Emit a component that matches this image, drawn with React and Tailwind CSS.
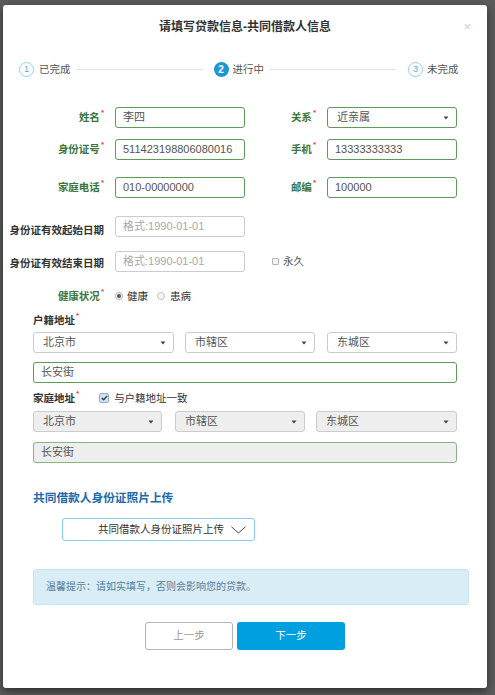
import React from "react";

const Req = () => (
  <span className="text-[#e8473b] text-[8px] align-top relative -top-[3px] ml-[1px]">*</span>
);

const Arrow = () => (
  <svg width="6" height="4" viewBox="0 0 6 4" className="shrink-0">
    <path d="M0.5 0.5 L5.5 0.5 L3 3.5 Z" fill="#444" />
  </svg>
);

const Select = ({ value, w, disabled }) => (
  <div
    className={`${w} h-[21px] rounded-[3px] border flex items-center justify-between pl-[9px] pr-[7px] text-[11px] text-[#555] ${
      disabled ? "bg-[#eeeeee] border-[#cccccc]" : "bg-white border-[#cccccc]"
    }`}
  >
    <span>{value}</span>
    <Arrow />
  </div>
);

const GreenSelect = ({ value }) => (
  <div className="w-[130px] h-[21px] rounded-[3px] border border-[#5f9a5c] bg-white flex items-center justify-between pl-[9px] pr-[7px] text-[11px] text-[#555]">
    <span>{value}</span>
    <Arrow />
  </div>
);

const Input = ({ value, placeholder, w = "w-[130px]", green = true, disabled }) => (
  <div
    className={`${w} h-[21px] rounded-[3px] border flex items-center pl-[7px] text-[11px] ${
      green ? (disabled ? "border-[#86b583]" : "border-[#5f9a5c]") : "border-[#cccccc]"
    } ${disabled ? "bg-[#eeeeee]" : "bg-white"} ${value ? "text-[#555]" : "text-[#a8a8a8]"}`}
  >
    {value || placeholder}
  </div>
);

const Label = ({ children, req, w = "w-[101px]", dark, extra = "" }) => (
  <div
    className={`${w} shrink-0 text-right text-[10.5px] font-bold leading-none whitespace-nowrap ${
      dark ? "text-[#333]" : "text-[#3c763d]"
    } ${extra}`}
  >
    {children}
    {req && <Req />}
  </div>
);

const StepCircle = ({ n, active }) =>
  active ? (
    <div className="shrink-0 w-[15px] h-[15px] rounded-full bg-[#1c97d4] text-white text-[10px] font-bold flex items-center justify-center leading-none">
      {n}
    </div>
  ) : (
    <div className="shrink-0 w-[15px] h-[15px] rounded-full border border-[#8fd3f0] text-[#55afe0] text-[9px] flex items-center justify-center leading-none">
      {n}
    </div>
  );

export default function App() {
  return (
    <div className="w-[495px] h-[695px] bg-[#5b5b5b] pt-[5px] pl-[3px] overflow-hidden font-['Liberation_Sans','Noto_Sans_CJK_SC',sans-serif]">
      <div className="w-[484px] h-[683px] bg-white rounded-[3px] shadow-[0_3px_9px_rgba(0,0,0,0.5)] flex flex-col">
        {/* header */}
        <div className="relative h-[44px] flex items-center justify-center shrink-0">
          <h1 className="text-[12px] font-bold text-[#333] leading-none">请填写贷款信息-共同借款人信息</h1>
          <span className="absolute right-[16px] top-[15px] text-[#cfcfcf] text-[13px] leading-none">×</span>
        </div>

        {/* steps */}
        <div className="mt-[13px] ml-[16px] w-[438px] h-[15px] flex items-center shrink-0">
          <StepCircle n="1" />
          <span className="shrink-0 whitespace-nowrap ml-[5px] text-[10.5px] text-[#555] leading-none">已完成</span>
          <div className="shrink-0 ml-[6px] mr-[11px] w-[126px] h-px bg-[#e3e3e3]" />
          <StepCircle n="2" active />
          <span className="shrink-0 whitespace-nowrap ml-[4px] text-[10.5px] text-[#555] leading-none">进行中</span>
          <div className="shrink-0 ml-[6px] mr-[12px] w-[126px] h-px bg-[#e3e3e3]" />
          <StepCircle n="3" />
          <span className="shrink-0 whitespace-nowrap ml-[4px] text-[10.5px] text-[#555] leading-none">未完成</span>
        </div>

        {/* row 1 */}
        <div className="mt-[30px] h-[21px] flex items-center shrink-0">
          <Label req>姓名</Label>
          <div className="ml-[11px]"><Input value="李四" /></div>
          <Label req w="w-[71px]">关系</Label>
          <div className="ml-[11px]"><GreenSelect value="近亲属" /></div>
        </div>

        {/* row 2 */}
        <div className="mt-[11px] h-[21px] flex items-center shrink-0">
          <Label req>身份证号</Label>
          <div className="ml-[11px]"><Input value="511423198806080016" /></div>
          <Label req w="w-[71px]">手机</Label>
          <div className="ml-[11px]"><Input value="13333333333" /></div>
        </div>

        {/* row 3 */}
        <div className="mt-[17px] h-[21px] flex items-center shrink-0">
          <Label req>家庭电话</Label>
          <div className="ml-[11px]"><Input value="010-00000000" /></div>
          <Label req w="w-[71px]">邮编</Label>
          <div className="ml-[11px]"><Input value="100000" /></div>
        </div>

        {/* row 4 */}
        <div className="mt-[18px] h-[21px] flex items-center shrink-0">
          <Label dark extra="mt-[7px]">身份证有效起始日期</Label>
          <div className="ml-[11px]"><Input placeholder="格式:1990-01-01" green={false} /></div>
        </div>

        {/* row 5 */}
        <div className="mt-[14px] h-[21px] flex items-center shrink-0">
          <Label dark extra="mt-[4px]">身份证有效结束日期</Label>
          <div className="ml-[11px]"><Input placeholder="格式:1990-01-01" green={false} /></div>
          <div className="ml-[27px] w-[7px] h-[7px] border border-[#b5b5b5] rounded-[1px] bg-[#f4f4f4]" />
          <span className="ml-[4px] text-[10.5px] text-[#555] leading-none">永久</span>
        </div>

        {/* row 6 health */}
        <div className="mt-[14px] h-[20px] flex items-center shrink-0">
          <Label req>健康状况</Label>
          <div className="ml-[11px] w-[8px] h-[8px] rounded-full border border-[#b5b5b5] bg-[#f4f4f4] flex items-center justify-center">
            <div className="w-[4px] h-[4px] rounded-full bg-[#555]" />
          </div>
          <span className="ml-[4px] text-[10.5px] text-[#333] leading-none">健康</span>
          <div className="ml-[9px] w-[8px] h-[8px] rounded-full border border-[#c5c5c5] bg-[#f4f4f4]" />
          <span className="ml-[5px] text-[10.5px] text-[#333] leading-none">患病</span>
        </div>

        {/* 户籍地址 */}
        <div className="mt-[6px] h-[16px] flex items-center pl-[30px] shrink-0">
          <span className="text-[10.5px] font-bold text-[#333] leading-none">
            户籍地址<Req />
          </span>
        </div>
        <div className="mt-[4px] ml-[30px] flex shrink-0">
          <Select value="北京市" w="w-[141px]" />
          <div className="ml-[11px]"><Select value="市辖区" w="w-[130px]" /></div>
          <div className="ml-[12px]"><Select value="东城区" w="w-[130px]" /></div>
        </div>
        <div className="mt-[9px] ml-[30px] shrink-0">
          <Input value="长安街" w="w-[424px]" />
        </div>

        {/* 家庭地址 */}
        <div className="mt-[7px] h-[16px] flex items-center pl-[30px] shrink-0">
          <span className="text-[10.5px] font-bold text-[#333] leading-none">
            家庭地址<Req />
          </span>
          <div className="ml-[20px] w-[10px] h-[10px] rounded-[2px] border border-[#8eaed0] bg-[#cfe2f6] flex items-center justify-center">
            <svg width="7" height="6" viewBox="0 0 7 6">
              <path d="M0.8 3 L2.7 4.8 L6.2 0.9" stroke="#333" strokeWidth="1.3" fill="none" />
            </svg>
          </div>
          <span className="ml-[5px] text-[10.5px] text-[#333] leading-none">与户籍地址一致</span>
        </div>
        <div className="mt-[5px] ml-[30px] flex shrink-0">
          <Select value="北京市" w="w-[129px]" disabled />
          <div className="ml-[13px]"><Select value="市辖区" w="w-[130px]" disabled /></div>
          <div className="ml-[11px]"><Select value="东城区" w="w-[141px]" disabled /></div>
        </div>
        <div className="mt-[10px] ml-[30px] shrink-0">
          <Input value="长安街" w="w-[424px]" disabled />
        </div>

        {/* upload section */}
        <div className="mt-[27px] h-[16px] flex items-center pl-[30px] shrink-0">
          <span className="text-[11.7px] font-bold text-[#1b6aab] leading-none">共同借款人身份证照片上传</span>
        </div>
        <div className="mt-[12px] ml-[59px] w-[193px] h-[23px] rounded-[3px] border border-[#86cdee] flex items-center justify-end pr-[8px] shrink-0">
          <span className="text-[10.5px] text-[#333] leading-none">共同借款人身份证照片上传</span>
          <svg width="15" height="8" viewBox="0 0 15 8" className="ml-[7px]">
            <polyline points="0.5,0.8 7.5,7 14.5,0.8" stroke="#444" strokeWidth="1" fill="none" />
          </svg>
        </div>

        {/* info */}
        <div className="mt-[28px] ml-[30px] w-[436px] h-[36px] rounded-[3px] border border-[#c3e6f3] bg-[#d9edf7] flex items-center pl-[12px] shrink-0">
          <span className="text-[10px] text-[#56809c] leading-none">温馨提示：请如实填写，否则会影响您的贷款。</span>
        </div>

        {/* buttons */}
        <div className="mt-[17px] ml-[142px] flex shrink-0">
          <div className="w-[88px] h-[28px] rounded-[3px] border border-[#b4b4b4] bg-white flex items-center justify-center text-[10.5px] text-[#999]">
            上一步
          </div>
          <div className="ml-[4px] w-[108px] h-[28px] rounded-[3px] bg-[#00a0e0] flex items-center justify-center text-[10.5px] text-white">
            下一步
          </div>
        </div>
      </div>
    </div>
  );
}
